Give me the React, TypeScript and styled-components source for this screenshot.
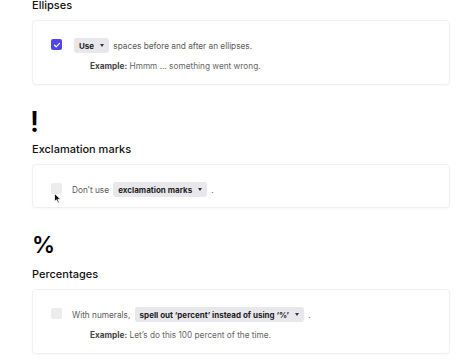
import styled, { createGlobalStyle } from 'styled-components'

const GlobalStyle = createGlobalStyle`
    html, body {
        margin: 0;
        padding: 0;
        background: #ffffff;
        overflow: hidden;
    }
    body {
        font-family: Inter, "Open Sans", sans-serif;
        color: #222;
    }
`

const Page = styled.div`
    width: 474px;
    height: 363px;
    overflow: hidden;
    position: relative;
    padding: 0 24px 0 32px;
    box-sizing: border-box;
`

const Section = styled.section`
    display: flex;
    flex-direction: column;
`

const Symbol = styled.div<{ $size: number; $after: number }>`
    font-size: ${p => p.$size}px;
    font-weight: 600;
    line-height: 1;
    color: #000;
    height: 28px;
    display: flex;
    align-items: center;
    margin: 23px 0 ${p => p.$after}px ${p => (p.$size > 27 ? '-2px' : '0')};
`

const Heading = styled.h3<{ $top?: number }>`
    margin: ${p => p.$top ?? 0}px 0 0 0;
    font-size: 11px;
    font-weight: 500;
    line-height: 14px;
    color: #111;
`

const Card = styled.div`
    margin-top: 8px;
    border: 1px solid #f0f0f1;
    border-radius: 4px;
    box-shadow: 0 1px 2px rgba(0, 0, 0, 0.03);
    padding: 17px 18px 10px;
    display: flex;
    align-items: flex-start;
    gap: 10px;
`

const Check = styled.div<{ $checked?: boolean }>`
    width: 11px;
    height: 11px;
    flex: none;
    border-radius: 2px;
    margin-top: 1px;
    background: ${p => (p.$checked ? '#5046e5' : '#ececee')};
    display: flex;
    align-items: center;
    justify-content: center;
`

const Body = styled.div`
    display: flex;
    flex-direction: column;
    gap: 7px;
`

const Rule = styled.div`
    display: flex;
    align-items: center;
    height: 15px;
    font-size: 8.25px;
    color: #5a5a5a;
    white-space: pre;
`

const Pill = styled.span`
    display: inline-flex;
    align-items: center;
    gap: 4px;
    height: 15px;
    padding: 0 5px;
    margin: 0 2px;
    background: #e8e8ec;
    border-radius: 3px;
    font-size: 8px;
    font-weight: 700;
    color: #1e1e1e;
`

const Caret = styled.span`
    width: 0;
    height: 0;
    border-left: 2.5px solid transparent;
    border-right: 2.5px solid transparent;
    border-top: 3px solid #333;
`

const Example = styled.div`
    margin-left: 18px;
    font-size: 8.25px;
    color: #666;
    line-height: 12px;
    padding-bottom: 2px;

    b {
        font-weight: 700;
        color: #444;
    }
`

const Pointer = styled.svg`
    position: absolute;
    left: 54px;
    top: 193px;
`

function Tick() {
    return (
        <svg width="8" height="8" viewBox="0 0 8 8">
            <path d="M1.5 4.2 L3.2 5.8 L6.5 2.3" fill="none" stroke="#fff" strokeWidth="1.2" strokeLinecap="round" strokeLinejoin="round" />
        </svg>
    )
}

export default function App() {
    return (
        <>
            <GlobalStyle />
            <Page>
                <Section>
                    <Heading $top={-2}>Ellipses</Heading>
                    <Card>
                        <Check $checked><Tick /></Check>
                        <Body>
                            <Rule>
                                <Pill>Use <Caret /></Pill> spaces before and after an ellipses.
                            </Rule>
                            <Example><b>Example:</b> Hmmm … something went wrong.</Example>
                        </Body>
                    </Card>
                </Section>

                <Section>
                    <Symbol $size={28} $after={6}>!</Symbol>
                    <Heading>Exclamation marks</Heading>
                    <Card>
                        <Check />
                        <Body>
                            <Rule>
                                Don’t use <Pill>exclamation marks <Caret /></Pill> .
                            </Rule>
                        </Body>
                    </Card>
                </Section>

                <Section>
                    <Symbol $size={23} $after={8}>%</Symbol>
                    <Heading>Percentages</Heading>
                    <Card>
                        <Check />
                        <Body>
                            <Rule>
                                With numerals, <Pill>spell out ‘percent’ instead of using ‘%’ <Caret /></Pill> .
                            </Rule>
                            <Example><b>Example:</b> Let’s do this 100 percent of the time.</Example>
                        </Body>
                    </Card>
                </Section>

                <Pointer width="8" height="11" viewBox="0 0 8 11">
                    <path d="M0.5 0.5 L0.5 8.5 L2.5 6.8 L4 10 L5.3 9.4 L3.9 6.3 L6.6 6.2 Z" fill="#111" stroke="#fff" strokeWidth="0.8" />
                </Pointer>
            </Page>
        </>
    )
}
